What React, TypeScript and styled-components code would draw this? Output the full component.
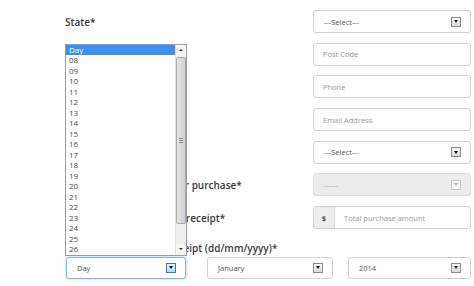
import React from "react";
import styled, { createGlobalStyle, css } from "styled-components";

const Global = createGlobalStyle`
  html, body { margin: 0; padding: 0; background: #fff; }
  body { font-family: "Open Sans", "DejaVu Sans", sans-serif; }
`;

const Page = styled.div`
  width: 474px;
  height: 286px;
  overflow: hidden;
  padding: 10px 0 0 65px;
  box-sizing: border-box;
`;

const Form = styled.form`
  display: flex;
  flex-direction: column;
  gap: 9.7px;
  width: 406px;
`;

const Row = styled.div`
  display: grid;
  grid-template-columns: 248px 158px;
  align-items: center;
  height: 23px;
`;

const Label = styled.label`
  font-size: 10px;
  font-weight: 600;
  color: #3a3a3a;
  white-space: nowrap;
  line-height: 14px;
`;

const fieldBase = css`
  box-sizing: border-box;
  height: 100%;
  border: 1px solid #d2d2d2;
  border-radius: 3px;
  background: #fff;
  font-size: 7.5px;
  display: flex;
  align-items: center;
`;

const Input = styled.div`
  ${fieldBase};
  padding-left: 9px;
  color: #9a9a9a;
`;

const Select = styled.div<{ $disabled?: boolean; $focused?: boolean; $w?: number }>`
  ${fieldBase};
  justify-content: space-between;
  padding: 0 9px 0 10px;
  color: #555;
  ${(p) => p.$w && css`width: ${p.$w}px;`}
  ${(p) =>
    p.$disabled &&
    css`
      background: #ececec;
      border-color: #dcdcdc;
      color: #9a9a9a;
    `}
  ${(p) =>
    p.$focused &&
    css`
      border-color: #80b6e6;
      box-shadow: 0 0 3px rgba(90, 160, 225, 0.55);
    `}
`;

const Arrow = styled.span<{ $disabled?: boolean; $focused?: boolean }>`
  box-sizing: border-box;
  width: 10px;
  height: 10px;
  border: 1px solid #8c8c8c;
  background: linear-gradient(#f6f6f6, #dadada);
  display: flex;
  align-items: center;
  justify-content: center;
  &::after {
    content: "";
    border-left: 2.5px solid transparent;
    border-right: 2.5px solid transparent;
    border-top: 3px solid #111;
  }
  ${(p) =>
    p.$disabled &&
    css`
      border-color: #c4c4c4;
      background: #f7f7f7;
      &::after { border-top-color: #aaa; }
    `}
  ${(p) =>
    p.$focused &&
    css`
      border-color: #3b79ad;
      background: linear-gradient(#e4f2fc, #bcdcf4);
    `}
`;

const Group = styled.div`
  ${fieldBase};
  overflow: hidden;
`;

const Addon = styled.span`
  width: 20px;
  height: 100%;
  background: #eeeeee;
  border-right: 1px solid #d8d8d8;
  display: flex;
  align-items: center;
  justify-content: center;
  font-weight: 700;
  color: #555;
`;

const GroupText = styled.span`
  padding-left: 9px;
  color: #9a9a9a;
`;

const DateBlock = styled.div`
  display: flex;
  flex-direction: column;
  gap: 2px;
  margin-top: 2px;
`;

const DateRow = styled.div`
  display: grid;
  grid-template-columns: 141px 141px 124px;
  height: 22px;
  padding-left: 1px;
`;

const Cell = styled.div`
  position: relative;
  height: 100%;
  display: flex;
`;

const ListBox = styled.div`
  position: absolute;
  left: -1px;
  bottom: calc(100% + 1px);
  width: 122px;
  box-sizing: border-box;
  border: 1px solid #9d9d9d;
  background: #fff;
  display: flex;
  z-index: 5;
`;

const Options = styled.ul`
  list-style: none;
  margin: 0;
  padding: 0;
  flex: 1;
`;

const Option = styled.li<{ $selected?: boolean }>`
  height: 10.5px;
  line-height: 10.5px;
  font-size: 8px;
  padding-left: 3px;
  color: #4a4a4a;
  ${(p) =>
    p.$selected &&
    css`
      background: #3d8ff2;
      color: #fff;
    `}
`;

const ScrollBar = styled.div`
  width: 10px;
  background: #efefef;
  border-left: 1px solid #e2e2e2;
  display: flex;
  flex-direction: column;
  align-items: stretch;
`;

const ScrollBtn = styled.div<{ $up?: boolean }>`
  height: 11px;
  display: flex;
  align-items: center;
  justify-content: center;
  background: #f4f4f4;
  &::after {
    content: "";
    border-left: 2px solid transparent;
    border-right: 2px solid transparent;
    ${(p) =>
      p.$up ? css`border-bottom: 2.5px solid #333;` : css`border-top: 2.5px solid #333;`}
  }
`;

const Thumb = styled.div`
  height: 167px;
  margin: 1px 0 0 0;
  box-sizing: border-box;
  border: 1px solid #a9a9a9;
  border-radius: 2px;
  background: linear-gradient(90deg, #e6e6e6, #cfcfcf);
  display: flex;
  align-items: center;
  justify-content: center;
`;

const Grip = styled.span`
  width: 4px;
  height: 5px;
  background: repeating-linear-gradient(#888 0 1px, transparent 1px 2px);
`;

const Track = styled.div`
  flex: 1;
`;

const days = ["08", "09", "10", "11", "12", "13", "14", "15", "16", "17", "18", "19", "20", "21", "22", "23", "24", "25", "26"];

export default function App() {
  return (
    <>
      <Global />
      <Page>
        <Form>
          <Row>
            <Label>State*</Label>
            <Select>
              ---Select---
              <Arrow />
            </Select>
          </Row>
          <Row>
            <Label>Postcode*</Label>
            <Input>Post Code</Input>
          </Row>
          <Row>
            <Label>Phone*</Label>
            <Input>Phone</Input>
          </Row>
          <Row>
            <Label>Email*</Label>
            <Input>Email Address</Input>
          </Row>
          <Row>
            <Label>Retailer*</Label>
            <Select>
              ---Select---
              <Arrow />
            </Select>
          </Row>
          <Row>
            <Label>Where did you make your purchase*</Label>
            <Select $disabled>
              ------
              <Arrow $disabled />
            </Select>
          </Row>
          <Row>
            <Label>Total amount printed on receipt*</Label>
            <Group>
              <Addon>$</Addon>
              <GroupText>Total purchase amount</GroupText>
            </Group>
          </Row>
          <DateBlock>
            <Label>Date printed on your receipt (dd/mm/yyyy)*</Label>
            <DateRow>
              <Cell>
                <Select $focused $w={120}>
                  Day
                  <Arrow $focused />
                </Select>
                <ListBox>
                  <Options>
                    <Option $selected>Day</Option>
                    {days.map((d) => (
                      <Option key={d}>{d}</Option>
                    ))}
                  </Options>
                  <ScrollBar>
                    <ScrollBtn $up />
                    <Thumb>
                      <Grip />
                    </Thumb>
                    <Track />
                    <ScrollBtn />
                  </ScrollBar>
                </ListBox>
              </Cell>
              <Cell>
                <Select $w={126}>
                  January
                  <Arrow />
                </Select>
              </Cell>
              <Cell>
                <Select $w={123}>
                  2014
                  <Arrow />
                </Select>
              </Cell>
            </DateRow>
          </DateBlock>
        </Form>
      </Page>
    </>
  );
}
